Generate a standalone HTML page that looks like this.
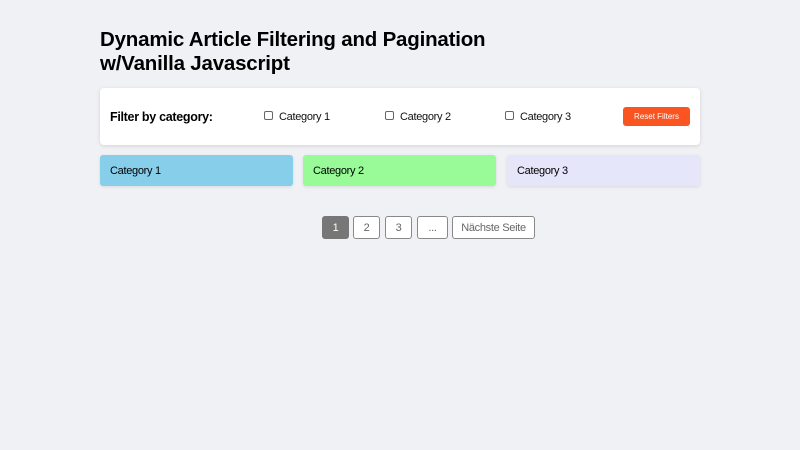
<!DOCTYPE html>
<html><head><style>
body{margin:0;background:#f0f1f5;font-family:"Liberation Sans",sans-serif;width:800px;height:450px;position:relative;overflow:hidden}
h1{position:absolute;left:100px;top:28px;margin:0;font-size:20.5px;line-height:24px;font-weight:bold;color:#000;letter-spacing:-0.2px}
.panel{position:absolute;left:100px;top:88px;width:600px;height:57px;background:#fff;border-radius:4px;box-shadow:0 1px 4px rgba(0,0,0,.12)}
.lbl{position:absolute;left:10px;top:22px;font-size:12.5px;font-weight:bold;letter-spacing:-0.3px}
.cb{position:absolute;top:23px;font-size:11px;color:#111;letter-spacing:-0.3px}
.cb i{display:inline-block;width:7px;height:7px;border:1px solid #666;border-radius:2px;margin-right:6px;vertical-align:0px}
.btn{position:absolute;left:523px;top:19px;width:67px;height:19px;background:#fa5421;color:#fff;font-size:8px;line-height:19px;text-align:center;border-radius:3px}
.card{position:absolute;top:155px;width:193px;height:31px;border-radius:3px;font-size:11px;letter-spacing:-0.3px;line-height:32px;box-shadow:0 1px 3px rgba(0,0,0,.1)}
.card span{padding-left:10px}
.pg{position:absolute;top:216px;height:21px;border:1px solid #888;border-radius:3px;font-size:11px;letter-spacing:-0.3px;line-height:22px;text-align:center;color:#666;background:#fff;box-sizing:content-box}
</style></head><body>
<h1>Dynamic Article Filtering and Pagination<br>w/Vanilla Javascript</h1>
<div class="panel">
<div class="lbl">Filter by category:</div>
<div class="cb" style="left:164px"><i></i>Category 1</div>
<div class="cb" style="left:285px"><i></i>Category 2</div>
<div class="cb" style="left:405px"><i></i>Category 3</div>
<div class="btn">Reset Filters</div>
</div>
<div class="card" style="left:100px;background:#87ceeb"><span>Category 1</span></div>
<div class="card" style="left:303px;background:#98fb98"><span>Category 2</span></div>
<div class="card" style="left:507px;background:#e6e6fa"><span>Category 3</span></div>
<div class="pg" style="left:322px;width:25px;background:#777;color:#fff;border-color:#777">1</div>
<div class="pg" style="left:353px;width:25px">2</div>
<div class="pg" style="left:385px;width:25px">3</div>
<div class="pg" style="left:417px;width:29px">...</div>
<div class="pg" style="left:452px;width:81px">Nächste Seite</div>
</body></html>
